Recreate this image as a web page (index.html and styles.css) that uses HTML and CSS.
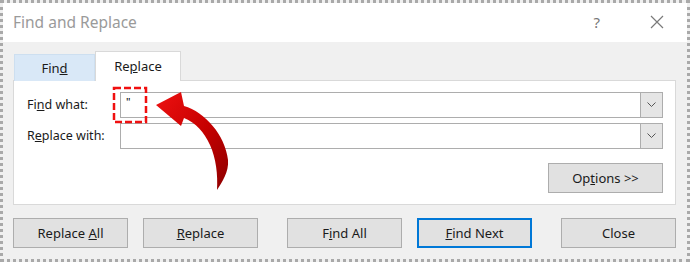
FILE: index.html
```html
<!DOCTYPE html>
<html>
<head>
  <title>Find and Replace</title>
  <link rel="stylesheet" href="styles.css">
</head>
<body>
  <div class="window">
    <div class="titlebar">
      <span class="title">Find and Replace</span>
      <span class="help">?</span>
      <svg class="close-x" width="14" height="14" viewBox="0 0 14 14">
        <path d="M1 1 L13 13 M13 1 L1 13" stroke="#7a7a7a" stroke-width="1.2" fill="none"/>
      </svg>
    </div>

    <div class="content">
      <div class="tabs">
        <div class="tab">Fin<u>d</u></div>
        <div class="tab active">Re<u>p</u>lace</div>
      </div>

      <div class="panel">
        <div class="row">
          <label>Fi<u>n</u>d what:</label>
          <div class="combo">
            <span class="value">"</span>
            <span class="drop">
              <svg width="9" height="6" viewBox="0 0 9 6"><path d="M0.5 0.5 L4.5 4.5 L8.5 0.5" stroke="#555" stroke-width="1" fill="none"/></svg>
            </span>
          </div>
        </div>
        <div class="row">
          <label>R<u>e</u>place with:</label>
          <div class="combo">
            <span class="value"></span>
            <span class="drop">
              <svg width="9" height="6" viewBox="0 0 9 6"><path d="M0.5 0.5 L4.5 4.5 L8.5 0.5" stroke="#555" stroke-width="1" fill="none"/></svg>
            </span>
          </div>
        </div>
        <div class="options-row">
          <button class="btn">Op<u>t</u>ions &gt;&gt;</button>
        </div>
      </div>

      <div class="actions">
        <button class="btn">Replace <u>A</u>ll</button>
        <button class="btn"><u>R</u>eplace</button>
        <button class="btn wide-gap">F<u>i</u>nd All</button>
        <button class="btn default"><u>F</u>ind Next</button>
        <button class="btn wide-gap">Close</button>
      </div>
    </div>

    <!-- red callout drawn over the dialog -->
    <svg class="annotation" width="690" height="262" viewBox="0 0 690 262">
      <defs>
        <linearGradient id="arrowFill" x1="0" y1="0" x2="1" y2="1">
          <stop offset="0" stop-color="#ee1111"/>
          <stop offset="0.55" stop-color="#c40000"/>
          <stop offset="1" stop-color="#8c0000"/>
        </linearGradient>
      </defs>
      <rect x="114" y="88" width="32" height="34" fill="none" stroke="#f01010" stroke-width="2.5" stroke-dasharray="7 3"/>
      <path d="M156 105 L181 92 L184 106 C205 112 225 135 228 160 C229 172 222 182 217 190 C218 175 216 158 210 145 C204 132 196 123 184 118 L181 126 Z" fill="url(#arrowFill)"/>
    </svg>
  </div>
</body>
</html>
```

FILE: styles.css
```css
body {
  margin: 0;
  font-family: 'Noto Sans', 'Open Sans', sans-serif;
  font-size: 12.5px;
  color: #1a1a1a;
}

.window {
  position: relative;
  width: 690px;
  height: 262px;
  box-sizing: border-box;
  border: 3px dotted #a9a9a9;
  background-color: #f0f0f0;
  display: flex;
  flex-direction: column;
}

.titlebar {
  height: 39px;
  background-color: #fff;
  display: flex;
  align-items: center;
  padding-left: 10px;
}

.title {
  font-size: 15.5px;
  color: #9a9a9a;
  flex: 1;
  margin-top: -2px;
}

.help {
  font-size: 15px;
  color: #777;
  margin-right: 50px;
  margin-top: -2px;
}

.close-x {
  margin-right: 23px;
  margin-top: -2px;
}

.content {
  flex: 1;
  padding: 9px 11px 0 10px;
}

.tabs {
  display: flex;
  align-items: flex-end;
  height: 29px;
}

.tab {
  box-sizing: border-box;
  height: 27px;
  width: 81px;
  margin-left: 1px;
  margin-bottom: -1px;
  background-color: #d9e8f7;
  border: 1px solid #cddff0;
  border-bottom: none;
  display: flex;
  justify-content: center;
  align-items: center;
  padding-bottom: 1px;
  font-size: 13px;
}

.tab.active {
  height: 30px;
  width: 86px;
  margin-left: 0;
  background-color: #fff;
  border-color: #d9d9d9;
  position: relative;
  padding-bottom: 2px;
}

.panel {
  background-color: #fff;
  border: 1px solid #d9d9d9;
  padding: 11px 12px 11px 13px;
  display: flex;
  flex-direction: column;
  gap: 5px;
}

.row {
  display: flex;
  align-items: center;
}

.row label {
  width: 93px;
  font-size: 12.5px;
  padding-bottom: 1px;
}

.combo {
  flex: 1;
  height: 26px;
  box-sizing: border-box;
  border: 1px solid #adadad;
  display: flex;
}

.value {
  flex: 1;
  padding-left: 5px;
  font-size: 11px;
  line-height: 18px;
  color: #000;
}

.drop {
  width: 21px;
  background-color: #e5e5e5;
  border-left: 1px solid #adadad;
  display: flex;
  justify-content: center;
  align-items: center;
}

.options-row {
  display: flex;
  justify-content: flex-end;
  margin-top: 9px;
}

.btn {
  box-sizing: border-box;
  width: 115px;
  height: 30px;
  background-color: #e1e1e1;
  border: 1px solid #adadad;
  font-family: 'Noto Sans', 'Open Sans', sans-serif;
  font-size: 13px;
  color: #1a1a1a;
  padding: 0;
  margin: 0;
}

.actions {
  display: flex;
  margin-top: 13px;
  gap: 15px;
}

.actions .wide-gap {
  margin-left: 14px;
}

.btn.default {
  border: 2px solid #0078d7;
}

.annotation {
  position: absolute;
  left: -3px;
  top: -3px;
  pointer-events: none;
}
```
